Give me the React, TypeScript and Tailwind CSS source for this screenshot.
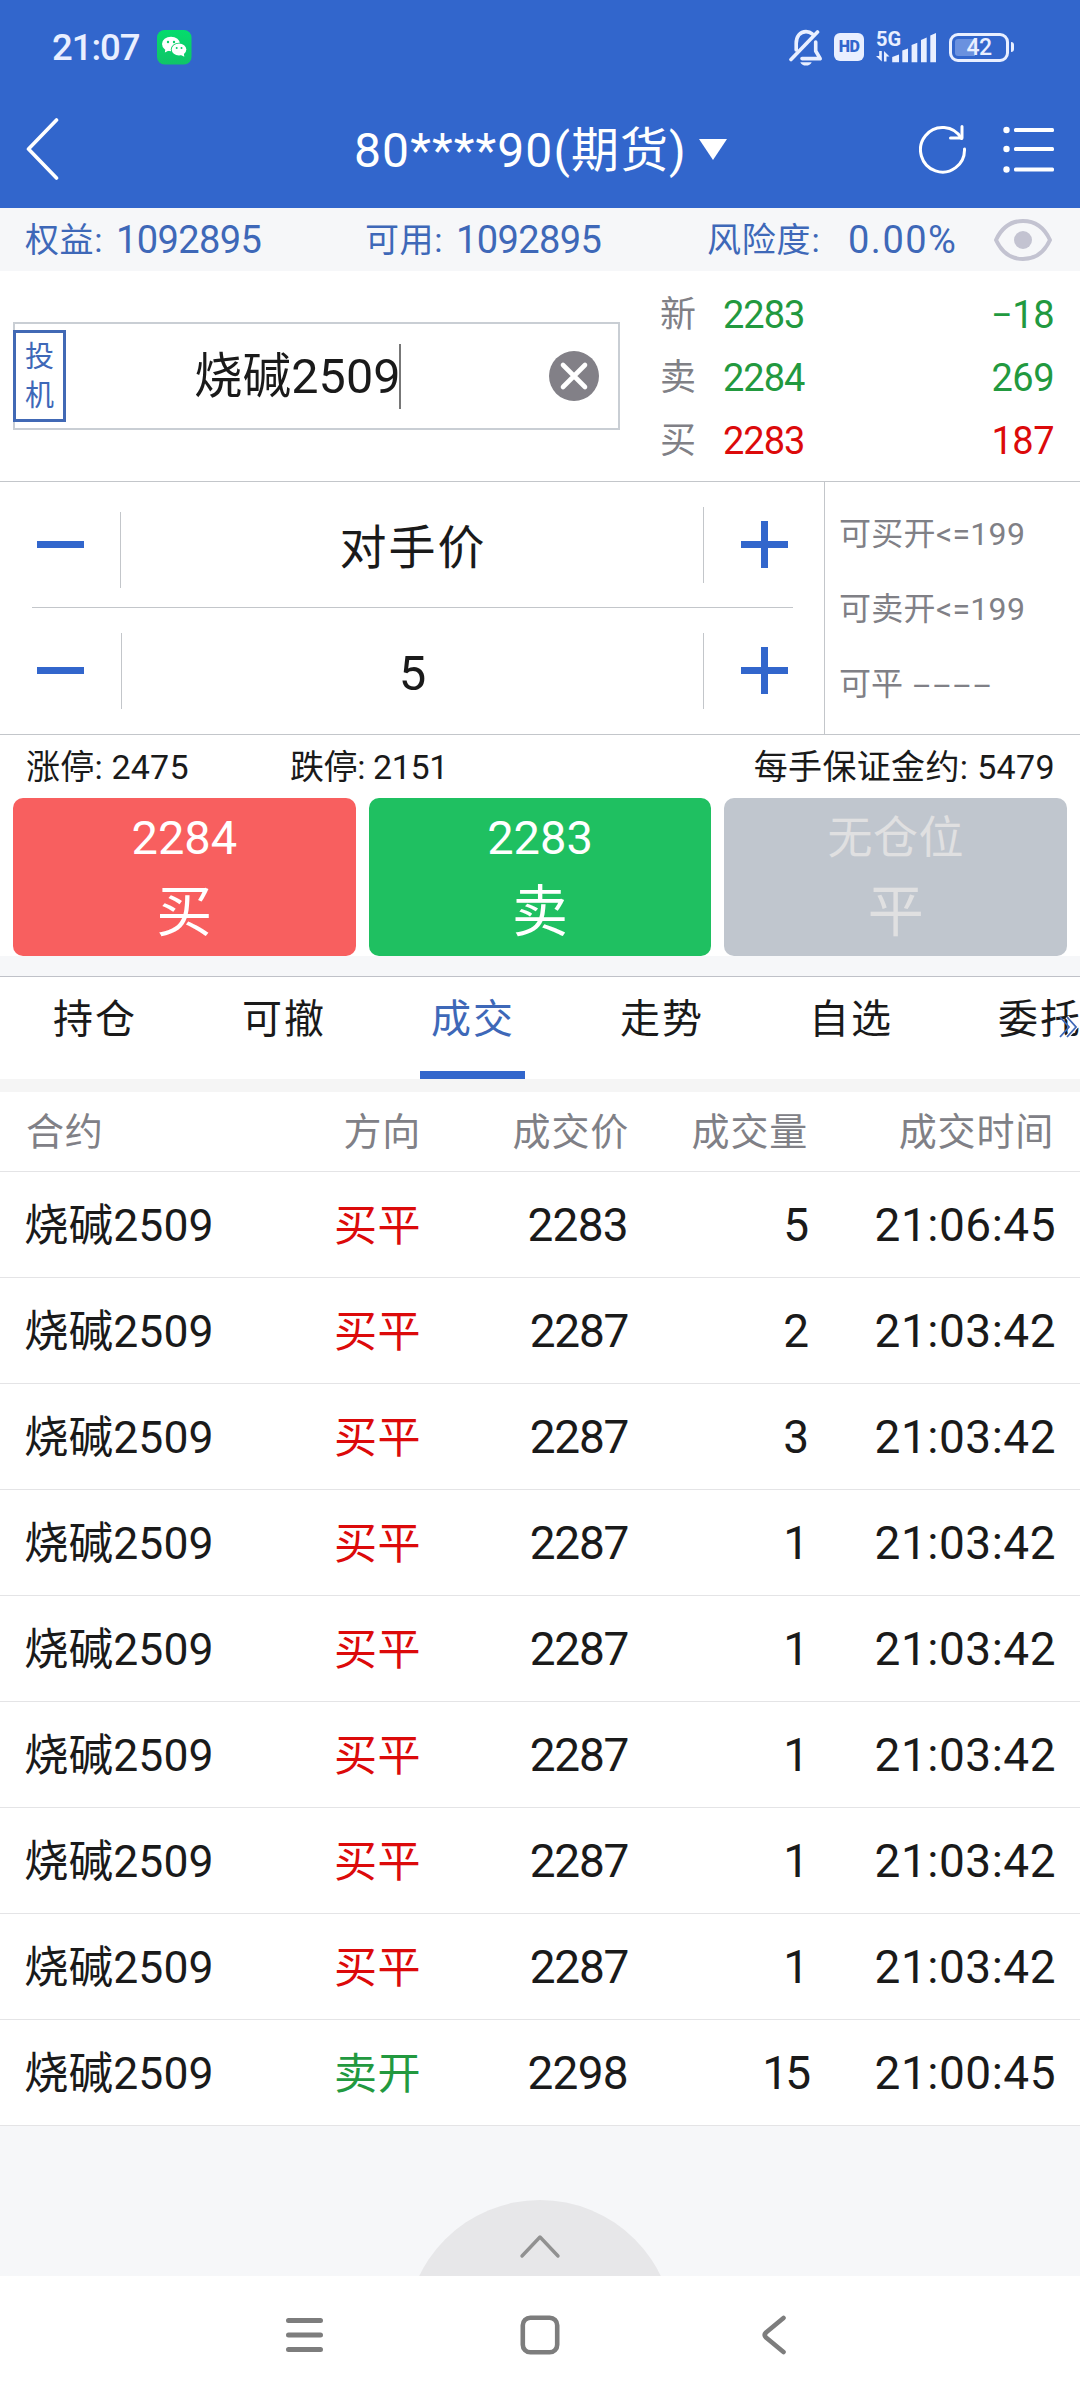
import type { ReactNode } from "react";

const HAIR = "bg-[#c3c6ca]";

function StatusBar() {
  return (
    <div className="flex h-[92px] items-center justify-between pt-[2px] pr-[66px] pl-[52px] text-[#e9efff]">
      <div className="flex items-center">
        <span className="w-[105px] text-[36.5px] leading-[37px] font-medium tracking-[-1px]">21:07</span>
        <svg width="35" height="35" viewBox="0 0 35 35">
          <defs>
            <linearGradient id="wx" x1="0" y1="0" x2="0" y2="1">
              <stop offset="0" stopColor="#04dc6c" />
              <stop offset="1" stopColor="#10c468" />
            </linearGradient>
          </defs>
          <rect width="34.5" height="34.5" rx="7.5" fill="url(#wx)" />
          <ellipse cx="14" cy="14" rx="9" ry="7.3" fill="#fff" />
          <path d="M8.5 18l-.6 4.4 4.4-2.2z" fill="#fff" />
          <ellipse cx="22" cy="19.6" rx="8.2" ry="6.9" fill="#0bd06a" />
          <ellipse cx="22" cy="19.6" rx="7.3" ry="6" fill="#fff" />
          <path d="M26.8 23l.5 3.8-4-2z" fill="#fff" />
          <circle cx="11" cy="12" r="1.2" fill="#0bd06a" />
          <circle cx="17" cy="12" r="1.2" fill="#0bd06a" />
          <circle cx="19.7" cy="18" r="1" fill="#0bd06a" />
          <circle cx="24.5" cy="18" r="1" fill="#0bd06a" />
        </svg>
      </div>
      <div className="flex items-center">
        <svg width="34" height="37" viewBox="0 0 34 37" fill="none" stroke="currentColor" strokeWidth="3.6" strokeLinecap="round" strokeLinejoin="round">
          <path d="M7.2 21V14.5C7.2 7.5 11 2.6 17 2.6c2.6 0 4.600 .8 6.200 2.300" />
          <path d="M26.7 13v9l4.500 7.600H13" />
          <path d="M2 30.500L28.500 3" />
          <path d="M11.300 33.200h11.400c-1 2.400-3.100 3.400-5.700 3.400s-4.700-1-5.700-3.400z" fill="currentColor" stroke="none" />
        </svg>
        <span className="ml-[11px] flex h-[28px] w-[30px] items-center justify-center rounded-[6px] bg-[#e9efff] text-[16px] leading-[16px] font-black tracking-[-0.5px] text-[#3266cc]">HD</span>
        <div className="relative ml-[12px] h-[34px] w-[61px]">
          <span className="absolute top-[1px] left-0 text-[20px] leading-[16px] font-bold">5G</span>
          <svg className="absolute inset-0" width="61" height="34" viewBox="0 0 61 34" fill="currentColor">
            <path d="M3.200 21h2.600v10.500L0 26h3.200zM8 31.500V21l5.500 5.500h-3v5z" />
            <path d="M16.200 27l6.800-2.500v7.700h-6.800z" />
            <path d="M26.300 20.500l5.700-2v13.700h-5.700zM35.600 15l5.700-2.200v19.400h-5.700zM45 10l5.700-2.400v24.600H45zM54.300 5.500L60 3v29.200h-5.700z" />
          </svg>
        </div>
        <div className="ml-[12px] flex items-center gap-[2px]">
          <div className="relative flex h-[29px] w-[60px] items-center justify-center rounded-[9px] border-[3px] border-current">
            <span className="absolute top-[3px] left-[3px] h-[17px] w-[20px] rounded-l-[3px] bg-[#6a91df]" />
            <span className="relative text-[23px] leading-[23px] font-medium tracking-[-0.5px]">42</span>
          </div>
          <span className="h-[10px] w-[3px] rounded-r-[3px] bg-current" />
        </div>
      </div>
    </div>
  );
}

function TitleBar() {
  return (
    <div className="flex h-[116px] items-center pr-[26px] pl-[26px] text-white">
      <svg className="mb-[2px]" width="34" height="64" viewBox="0 0 34 64" fill="none" stroke="currentColor" strokeWidth="3.600" strokeLinecap="round" strokeLinejoin="round">
        <path d="M30.500 3L2.500 32l28 29" />
      </svg>
      <div className="ml-[294px] flex items-center gap-[13px] whitespace-nowrap">
        <span className="w-[332px] pt-[2px] text-[48px] leading-[60px] tracking-[1.1px]">80****90(期货)</span>
        <svg className="mb-[2px]" width="28" height="21" viewBox="0 0 28 21" fill="currentColor">
          <path d="M0 0h28L14 21z" />
        </svg>
      </div>
      <svg className="ml-auto" width="50" height="52" viewBox="0 0 50 52" fill="none" stroke="currentColor" strokeWidth="3" strokeLinecap="round" strokeLinejoin="round">
        <path d="M45.500 25A22 22.300 0 1 1 42.500 14.500" />
        <path d="M43 2.500V14H31.500" />
      </svg>
      <svg className="mb-[2px] ml-[33px]" width="52" height="48" viewBox="0 0 52 48" fill="currentColor">
        {[5, 24, 44.5].map((y) => (
          <g key={y}>
            <circle cx="4.500" cy={y} r="3.200" />
            <rect x="12" y={y - 2} width="40" height="4" rx="1.500" />
          </g>
        ))}
      </svg>
    </div>
  );
}

function AccountBar() {
  return (
    <div className="flex h-[63px] items-center bg-[#f6f7f9] pt-[1px] pl-[25px] text-[38px] leading-[40px] whitespace-pre text-[#3e68b8]">
      <div className="flex w-[340px]">
        <span className="w-[91px] text-[34px] tracking-[0.6px]">权益:</span>
        <span className="tracking-[-0.6px]">1092895</span>
      </div>
      <div className="flex w-[342px]">
        <span className="w-[91px] text-[34px] tracking-[0.6px]">可用:</span>
        <span className="tracking-[-0.6px]">1092895</span>
      </div>
      <div className="flex">
        <span className="w-[141px] text-[34px] tracking-[0.8px]">风险度:</span>
        <span className="w-[145px] text-[38px] tracking-[1.5px]">0.00%</span>
      </div>
      <svg width="60" height="44" viewBox="0 0 60 44" fill="none" stroke="#c3c3d1" strokeWidth="4" strokeLinejoin="round">
        <path d="M3 22C9 9 18 3 30 3s21 6 27 19c-6 13-15 19-27 19S9 35 3 22z" />
        <circle cx="30" cy="22" r="9" fill="#c3c3d1" stroke="none" />
      </svg>
    </div>
  );
}

function Quote({ label, price, value, tone }: { label: string; price: string; value: string; tone: string }) {
  return (
    <div className="flex h-[63px] items-center">
      <span className="w-[63px] text-[36px] leading-[40px] text-[#808086]">{label}</span>
      <span className={"text-[38px] leading-[40px] tracking-[-1px] " + tone}>{price}</span>
      <span className={"ml-auto text-[38px] leading-[40px] tracking-[-0.5px] " + tone}>{value}</span>
    </div>
  );
}

function ContractPanel() {
  return (
    <div className="flex h-[210px] pl-[13px]">
      <div className="mt-[51px] flex h-[108px] w-[607px] border-2 border-[#c9ced4]">
        <div className="mt-[6px] -ml-[2px] flex h-[92px] w-[53px] shrink-0 flex-col items-center justify-center border-[3px] border-[#4169b5] pt-[1px] text-[29px] leading-[39px] text-[#3e68b8]">
          <span>投</span>
          <span>机</span>
        </div>
        <div className="ml-[128px] flex w-[355px] items-center">
          <span className="w-[205px] pt-[2px] text-[48.5px] leading-[60px] tracking-[0.1px] whitespace-nowrap text-[#1a1a1a]">烧碱2509</span>
          <span className="h-[65px] w-[1.5px] bg-[#777]" />
        </div>
        <svg className="my-auto shrink-0" width="50" height="50" viewBox="0 0 50 50">
          <circle cx="25" cy="25" r="25" fill="#828087" />
          <path d="M14 14l22 22m0-22l-22 22" stroke="#fff" strokeWidth="4.600" strokeLinecap="round" />
        </svg>
      </div>
      <div className="ml-[40px] w-[394px] pt-[12px]">
        <Quote label="新" price="2283" value="−18" tone="text-[#22993f]" />
        <Quote label="卖" price="2284" value="269" tone="text-[#22993f]" />
        <Quote label="买" price="2283" value="187" tone="text-[#dc0a0a]" />
      </div>
    </div>
  );
}

function Minus() {
  return <span className="block h-[7px] w-[47px] bg-[#3266cc]" />;
}

function Plus() {
  return (
    <svg width="47" height="47" viewBox="0 0 47 47" fill="#3266cc">
      <path d="M20 0h7v20h20v7H27v20h-7V27H0v-7h20z" />
    </svg>
  );
}

function Stepper({ children, left, right }: { children: ReactNode; left: string; right: string }) {
  return (
    <div className="flex h-[125px] items-center">
      <div className="w-[83px] pl-[37px]">
        <Minus />
      </div>
      <span className={"h-[76px] w-px " + HAIR + " " + left} />
      <div className="flex-1 text-center text-[#1a1a1a]">{children}</div>
      <span className={"h-[76px] w-px " + HAIR + " " + right} />
      <div className="w-[120px] pl-[37px]">
        <Plus />
      </div>
    </div>
  );
}

function OrderForm() {
  return (
    <div className="flex h-[254px] border-y border-[#c3c6ca]">
      <div className="w-[824px]">
        <Stepper left="ml-[37px] mt-[11px]" right="mt-0">
          <span className="relative top-[3px] left-[1px] text-[47px] leading-[60px] tracking-[2px]">对手价</span>
        </Stepper>
        <div className={"ml-[32px] h-px w-[761px] " + HAIR} />
        <Stepper left="ml-[38px]" right="mt-0">
          <span className="relative top-[3px] text-[49px] leading-[60px]">5</span>
        </Stepper>
      </div>
      <div className="flex flex-1 flex-col border-l border-[#c3c6ca] pt-[15px] pl-[14px] text-[32px] leading-[75px] whitespace-nowrap text-[#808086]">
        <span className="tracking-[0.300px]">可买开&lt;=199</span>
        <span className="tracking-[0.300px]">可卖开&lt;=199</span>
        <span className="flex">
          可平
          <span className="ml-[10px] inline-block origin-left scale-x-[1.950] tracking-[1.500px]">----</span>
        </span>
      </div>
    </div>
  );
}

function LimitRow() {
  return (
    <div className="flex h-[63px] items-center pr-[25px] pl-[26px] text-[34px] leading-[40px] whitespace-pre text-[#1a1a1a]">
      <span className="w-[264px] tracking-[0.200px]">涨停: 2475</span>
      <span className="tracking-[-0.400px]">跌停: 2151</span>
      <span className="ml-auto tracking-[0.350px]">每手保证金约: 5479</span>
    </div>
  );
}

function TradeButton({ top, label, tone }: { top: string; label: string; tone: string }) {
  return (
    <button className={"flex flex-1 flex-col items-center rounded-[10px] pt-[9px] " + tone}>
      <span className={top === "无仓位" ? "pt-px text-[45px] leading-[61px] tracking-[0.500px]" : "text-[47px] leading-[62px]"}>{top}</span>
      <span className="mt-[5px] text-[56px] leading-[76px]">{label}</span>
    </button>
  );
}

const TABS = ["持仓", "可撤", "成交", "走势", "自选", "委托"];

function Tabs() {
  return (
    <div className="relative flex h-[103px] overflow-hidden border-t border-[#bfc1c8] bg-white">
      {TABS.map((t) => (
        <div key={t} className="flex w-[189px] shrink-0 flex-col items-center">
          <span className={t === "成交" ? "mt-[13px] pl-[1px] text-[40px] leading-[60px] tracking-[2px] text-[#3e68b8]" : "mt-[13px] pl-[1px] text-[40px] leading-[60px] tracking-[2px] text-[#1a1a1a]"}>{t}</span>
          {t === "成交" && <span className="mt-auto h-[8px] w-[105px] bg-[#3266cc]" />}
        </div>
      ))}
      <svg className="absolute top-[39px] left-[1058px]" width="21" height="22" viewBox="0 0 21 22" fill="none">
        <path d="M9 1l9 10-9 10" stroke="#fff" strokeWidth="4" />
        <path d="M2 1l9 10-9 10M9 1l9 10-9 10" stroke="#3e68b8" strokeWidth="1.800" />
      </svg>
    </div>
  );
}

type Trade = [string, string, string, string];
const TRADES: Trade[] = [
  ["买平", "2283", "5", "21:06:45"],
  ["买平", "2287", "2", "21:03:42"],
  ["买平", "2287", "3", "21:03:42"],
  ["买平", "2287", "1", "21:03:42"],
  ["买平", "2287", "1", "21:03:42"],
  ["买平", "2287", "1", "21:03:42"],
  ["买平", "2287", "1", "21:03:42"],
  ["买平", "2287", "1", "21:03:42"],
  ["卖开", "2298", "15", "21:00:45"],
];

function TradeTable() {
  return (
    <div className="bg-white">
      <div className="grid h-[80px] grid-cols-[395px_208px_179px_246px] items-center border-b border-[#e4e4e6] pt-[1px] pl-[26px] text-right text-[38px] leading-[50px] tracking-[0.8px] text-[#808086]">
        <div className="flex justify-between">
          <span>合约</span>
          <span>方向</span>
        </div>
        <span>成交价</span>
        <span>成交量</span>
        <span>成交时间</span>
      </div>
      {TRADES.map(([side, price, qty, time], i) => (
        <div key={i} className="grid h-[106px] grid-cols-[397px_207px_180px_248px] items-center border-b border-[#e4e4e6] pt-[1px] pl-[24px] text-right text-[46px] leading-[60px] text-[#1a1a1a]">
          <div className="flex justify-between pt-[2px]">
            <span className="text-[44.500px] tracking-[0.100px]">烧碱2509</span>
            <span className={side === "买平" ? "text-[43px] tracking-[0.500px] text-[#dc0a0a]" : "text-[43px] tracking-[0.500px] text-[#22993f]"}>{side}</span>
          </div>
          <span className={price === "2287" ? "tracking-[-1.300px]" : "tracking-[-0.700px]"}>{price}</span>
          <span className={qty === "15" ? "tracking-[-3px]" : "tracking-[-1px]"}>{qty}</span>
          <span className="tracking-[0.500px]">{time}</span>
        </div>
      ))}
    </div>
  );
}

function NavBar() {
  return (
    <div className="flex h-[124px] items-center bg-white pb-[6px] pl-[284px] text-[#7d7d7d]">
      <svg width="40" height="42" viewBox="0 0 40 42" stroke="currentColor" strokeWidth="5" strokeLinecap="round">
        <path d="M4.500 6.500h32M4.500 21h32M4.500 35.500h32" />
      </svg>
      <svg className="ml-[195px]" width="42" height="42" viewBox="0 0 42 42" fill="none" stroke="currentColor" strokeWidth="4.600">
        <rect x="3.800" y="3.800" width="34.400" height="34.400" rx="7.500" />
      </svg>
      <svg className="ml-[198px]" width="30" height="42" viewBox="0 0 30 42" fill="none" stroke="currentColor" strokeWidth="4.600" strokeLinecap="round" strokeLinejoin="round">
        <path d="M24.500 4L7 18.500Q4.500 21 7 23.500L24.500 38" />
      </svg>
    </div>
  );
}

export default function App() {
  return (
    <div className="flex h-[2400px] w-[1080px] flex-col overflow-hidden bg-white font-[Roboto,'Noto_Sans_CJK_SC',sans-serif]">
      <header className="bg-[#3266cc]">
        <StatusBar />
        <TitleBar />
      </header>
      <AccountBar />
      <ContractPanel />
      <OrderForm />
      <LimitRow />
      <div className="flex h-[158px] gap-[13px] px-[13px]">
        <TradeButton top="2284" label="买" tone="bg-[#f85f5f] text-white" />
        <TradeButton top="2283" label="卖" tone="bg-[#1fc061] text-white" />
        <TradeButton top="无仓位" label="平" tone="bg-[#c0c6ce] text-[#e0e0e1]" />
      </div>
      <div className="h-[20px] bg-[#f6f7f9]" />
      <Tabs />
      <div className="h-[13px] bg-[#f5f5f5]" />
      <TradeTable />
      <div className="flex flex-1 items-end justify-center overflow-hidden bg-[#f6f7f9]">
        <div className="flex h-[76px] w-[268px] justify-center overflow-hidden">
          <div className="flex h-[268px] w-[268px] shrink-0 justify-center rounded-full bg-[#e7e7e9] pt-[33px]">
            <svg width="42" height="26" viewBox="0 0 42 26" fill="none" stroke="#919191" strokeWidth="3.400" strokeLinecap="round" strokeLinejoin="round">
              <path d="M3 23L21 4l18 19" />
            </svg>
          </div>
        </div>
      </div>
      <NavBar />
    </div>
  );
}
